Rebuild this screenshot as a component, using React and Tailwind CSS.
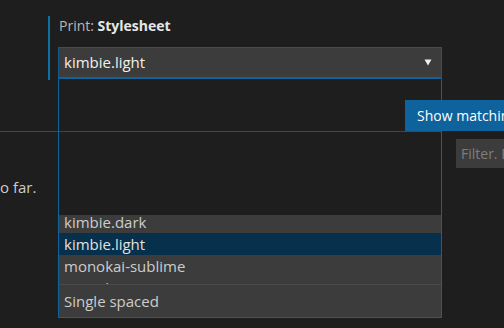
import React from "react";

const themes = ["kimbie.dark", "kimbie.light", "monokai-sublime", "monokai"];

export default function App() {
  const selected = "kimbie.light";

  return (
    <div
      className="relative w-[504px] h-[328px] overflow-hidden bg-[#1e1e1e] text-[#cccccc]"
      style={{ fontFamily: '"Open Sans", "Noto Sans", sans-serif' }}
    >
      {/* Setting: Print stylesheet */}
      <div className="flex pt-4 pl-12">
        <div className="w-[2px] h-[64px] bg-[#0e6fa3]" />
        <div className="pl-2">
          <div className="h-[31px] pl-px text-[14px] leading-[19px] text-[#b8b8b8]">
            Print: <span className="font-bold text-[#e6e6e6]">Stylesheet</span>
          </div>
          <div className="flex items-center justify-between w-[384px] h-[32px] pl-[5px] pr-[9px] bg-[#3c3c3c] border border-[#14598a] border-b-2 border-b-[#0e639c] text-[15px] text-[#f0f0f0]">
            <span>{selected}</span>
            <svg width="8" height="7" viewBox="0 0 8 7">
              <path d="M0.5 0.5 H7.5 L4 6.5 Z" fill="#f0f0f0" />
            </svg>
          </div>
        </div>
      </div>

      {/* Toolbar row */}
      <div className="flex justify-end mt-[20px]">
        <button className="w-[99px] h-[31px] pl-3 text-left whitespace-nowrap overflow-hidden bg-[#0e639c] text-white text-[14px]">
          Show matching
        </button>
      </div>
      <div className="w-[441px] h-px bg-[#454545]" />

      <div className="flex justify-between">
        <div className="pt-[45px] text-[15px] leading-[20px] text-[#cccccc]">
          o far.
        </div>
        <div className="mt-[7px] w-[48px] h-[29px] pl-[5px] flex items-center overflow-hidden whitespace-nowrap bg-[#3c3c3c] text-[14px] text-[#7d7d7d]">
          Filter. Enter
        </div>
      </div>

      {/* Open dropdown overlay */}
      <div className="absolute left-[58px] top-[79px] w-[384px] h-[239px] flex flex-col justify-end border-x border-b border-[#0e639c]">
        <div className="h-[69px] overflow-hidden bg-[#3c3c3c]">
          <div className="-mt-[4px]">
            {themes.map((t) => (
              <div
                key={t}
                className={
                  "h-[22px] pl-[5px] flex items-center text-[15px] " +
                  (t === selected
                    ? "bg-[#07304c] text-[#e0e0e0]"
                    : "text-[#cccccc]")
                }
              >
                {t}
              </div>
            ))}
          </div>
        </div>
        <div className="h-[33px] pl-[5px] flex items-center border-t border-[#4a4a4a] bg-[#3c3c3c] text-[15px] text-[#cccccc]">
          Single spaced
        </div>
      </div>
    </div>
  );
}
